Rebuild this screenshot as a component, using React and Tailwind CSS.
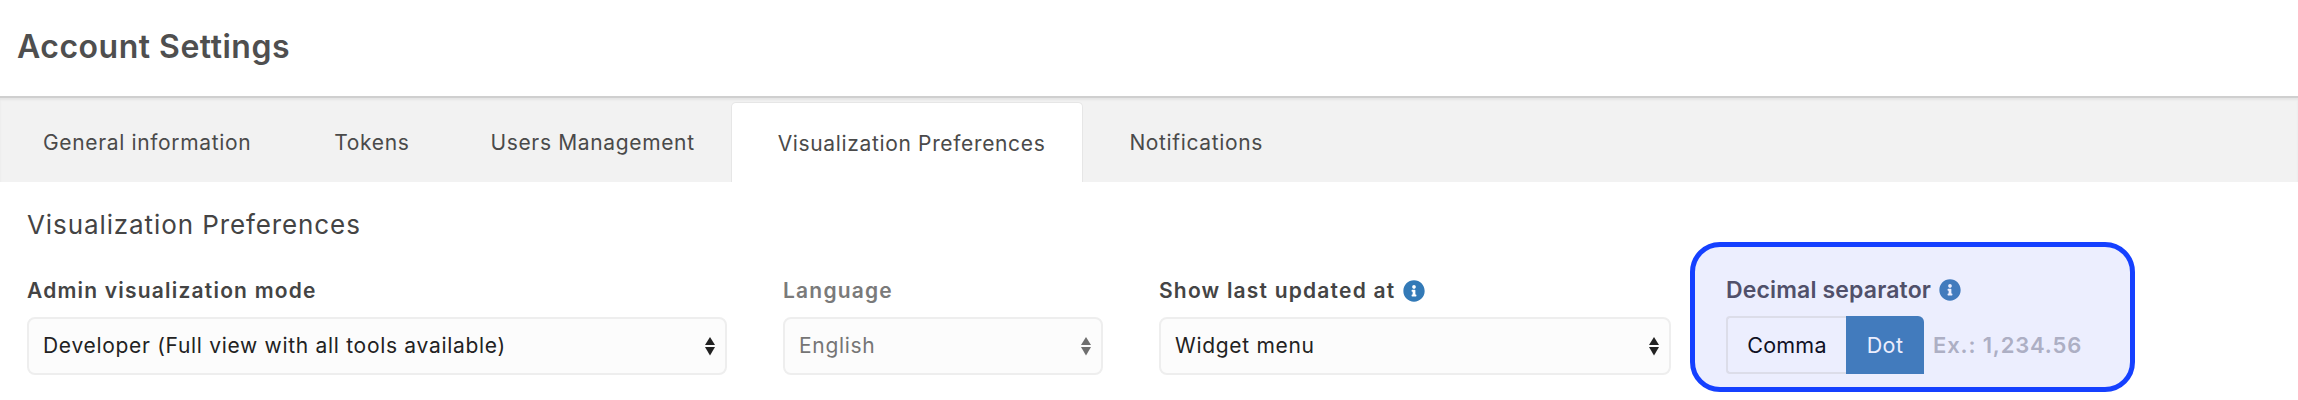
import React from "react";
import { FaInfoCircle } from "react-icons/fa";

function Arrows({ muted }) {
  return (
    <svg width="12" height="20" viewBox="0 0 12 20" className={muted ? "text-[#6f6f6f]" : "text-[#222222]"} fill="currentColor">
      <path d="M6 1 L11 9 L1 9 Z" />
      <path d="M6 19.5 L11 11 L1 11 Z" />
    </svg>
  );
}

function Select({ value, muted }) {
  return (
    <div className={`h-[58px] flex items-center justify-between pl-[14px] pr-[9px] rounded-[8px] border-2 border-[#eeeeee] bg-[#fcfcfc] text-[21px] tracking-[0.7px] ${muted ? "text-[#757575]" : "text-[#222222]"}`}>
      <span>{value}</span>
      <Arrows muted={muted} />
    </div>
  );
}

function Label({ children, muted, info }) {
  return (
    <div className={`h-[26px] flex items-center gap-[8px] text-[21px] tracking-[1.2px] font-semibold ${muted ? "text-[#7a7a7a]" : "text-[#444444]"}`}>
      <span>{children}</span>
      {info && <FaInfoCircle className="w-[22px] h-[22px] text-[#337ab7]" />}
    </div>
  );
}

export default function App() {
  const tabs = [
    ["General information", "pl-[43px] pr-[39px]"],
    ["Tokens", "pl-[44px] pr-[37px]"],
    ["Users Management", "pl-[44px] pr-[36px]"],
    ["Visualization Preferences", "pl-[46px] pr-[37px] bg-white rounded-t-[5px] border-x border-t border-[#e6e6e6]"],
    ["Notifications", "pl-[46px] pr-[38px]"],
  ];
  return (
    <div className="w-[2298px] h-[400px] bg-white overflow-hidden font-['Inter',sans-serif]">
      <div className="h-[96px] flex items-center pl-[17px] pb-[3px] text-[32px] tracking-[0.5px] font-semibold text-[#4f4f4f]">Account Settings</div>
      <div className="h-[86px] border-t-[2px] border-[#cfcfcf] bg-[#f2f2f2] shadow-[inset_0_2px_2px_#e4e4e4] flex items-end">
        {tabs.map(([t, c]) => (
          <div key={t} className={`h-[80px] flex items-center pt-[2px] text-[21px] tracking-[0.65px] text-[#4a4a4a] ${c}`}>
            {t}
          </div>
        ))}
      </div>
      <div className="pl-[27px] pt-[28px]">
        <div className="h-[28px] flex items-center text-[26px] tracking-[0.9px] text-[#444444]">Visualization Preferences</div>
        <div className="flex items-start gap-[56px] mt-[4px]">
          <div className="w-[700px] flex flex-col gap-[13px] pt-[36px]">
            <Label>Admin visualization mode</Label>
            <Select value="Developer (Full view with all tools available)" />
          </div>
          <div className="w-[320px] flex flex-col gap-[13px] pt-[36px]">
            <Label muted>Language</Label>
            <Select value="English" muted />
          </div>
          <div className="w-[512px] flex flex-col gap-[13px] pt-[36px]">
            <Label info>Show last updated at</Label>
            <Select value="Widget menu" />
          </div>
          <div className="-ml-[37px] w-[445px] h-[150px] rounded-[30px] border-[5px] border-[#1540ff] bg-[#eceefe] pl-[31px] pt-[30px]">
            <div className="h-[26px] flex items-center gap-[8px] text-[23px] tracking-[0.15px] font-semibold text-[#50506a]">
              <span>Decimal separator</span>
              <FaInfoCircle className="w-[22px] h-[22px] text-[#427bbd]" />
            </div>
            <div className="flex items-center mt-[13px]">
              <div className="h-[58px] w-[120px] flex items-center justify-center border-2 border-r-0 border-[#dcdde9] rounded-l-[4px] text-[21.5px] tracking-[0.2px] text-[#0f1024]">Comma</div>
              <div className="h-[58px] w-[78px] flex items-center justify-center bg-[#427bbd] rounded-tr-[6px] text-[21.5px] tracking-[0.4px] text-[#eceefe]">Dot</div>
              <div className="ml-[9px] text-[22px] tracking-[0.85px] font-semibold text-[#adafc4]">Ex.: 1,234.56</div>
            </div>
          </div>
        </div>
      </div>
    </div>
  );
}
